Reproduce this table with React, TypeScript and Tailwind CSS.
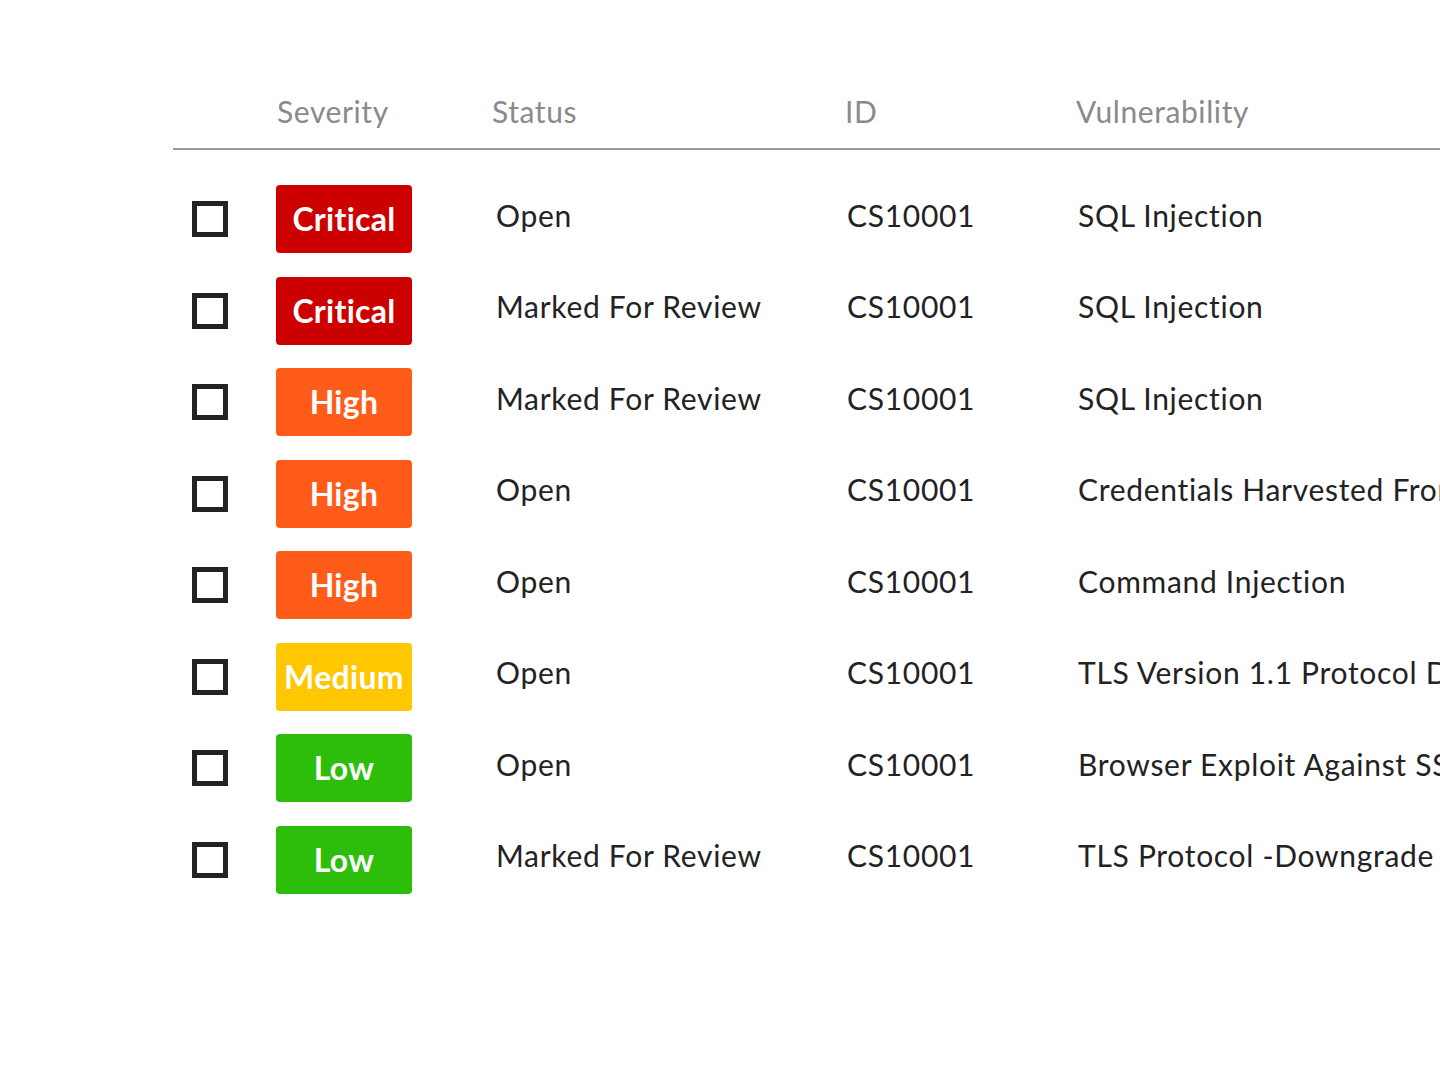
import React from "react";

type Severity = "Critical" | "High" | "Medium" | "Low";

interface Finding {
  severity: Severity;
  status: string;
  id: string;
  vulnerability: string;
}

const severityStyles: { [key in Severity]: string } = {
  Critical: "bg-[#cd0000]",
  High: "bg-[#ff5c1a]",
  Medium: "bg-[#ffc700]",
  Low: "bg-[#2dbe0b]",
};

const findings: Finding[] = [
  { severity: "Critical", status: "Open", id: "CS10001", vulnerability: "SQL Injection" },
  { severity: "Critical", status: "Marked For Review", id: "CS10001", vulnerability: "SQL Injection" },
  { severity: "High", status: "Marked For Review", id: "CS10001", vulnerability: "SQL Injection" },
  { severity: "High", status: "Open", id: "CS10001", vulnerability: "Credentials Harvested From Public Sources" },
  { severity: "High", status: "Open", id: "CS10001", vulnerability: "Command Injection" },
  { severity: "Medium", status: "Open", id: "CS10001", vulnerability: "TLS Version 1.1 Protocol Deprecated" },
  { severity: "Low", status: "Open", id: "CS10001", vulnerability: "Browser Exploit Against SSL/TLS" },
  { severity: "Low", status: "Marked For Review", id: "CS10001", vulnerability: "TLS Protocol -Downgrade Attack" },
];

const cols = "grid grid-cols-[103px_220px_351px_231px_1fr]";

export default function App() {
  return (
    <div
      className="min-h-[1080px] w-[1440px] overflow-hidden bg-white"
      style={{ fontFamily: "Lato, 'Noto Sans', sans-serif" }}
    >
      <div className="ml-[173px] pt-[93px]">
        <div className={`${cols} border-b-2 border-[#9a9a9a] pb-[19px] text-[30px] leading-[36px] tracking-[0.6px] text-[#8a8a8a]`}>
          <div />
          <div className="pl-[1px]">Severity</div>
          <div className="-ml-[4px]">Status</div>
          <div className="-ml-[2px]">ID</div>
          <div className="-ml-[2px] whitespace-nowrap">Vulnerability</div>
        </div>

        <div className="pt-[23.5px]">
          {findings.map((f, i) => (
            <div key={i} className={`${cols} h-[91.5px] items-center text-[30px] tracking-[0.7px] text-[#222222]`}>
              <div className="pl-[19px]">
                <div className="h-[36px] w-[36px] border-[5px] border-[#222222] bg-white" />
              </div>
              <div>
                <div
                  className={`flex h-[68px] w-[136px] items-center justify-center rounded-[4px] text-[32px] font-bold tracking-[0.3px] text-white ${severityStyles[f.severity]}`}
                >
                  {f.severity}
                </div>
              </div>
              <div className="-mt-[8px] whitespace-nowrap">{f.status}</div>
              <div className="-mt-[8px] whitespace-nowrap">{f.id}</div>
              <div className="-mt-[8px] overflow-hidden whitespace-nowrap">{f.vulnerability}</div>
            </div>
          ))}
        </div>
      </div>
    </div>
  );
}
